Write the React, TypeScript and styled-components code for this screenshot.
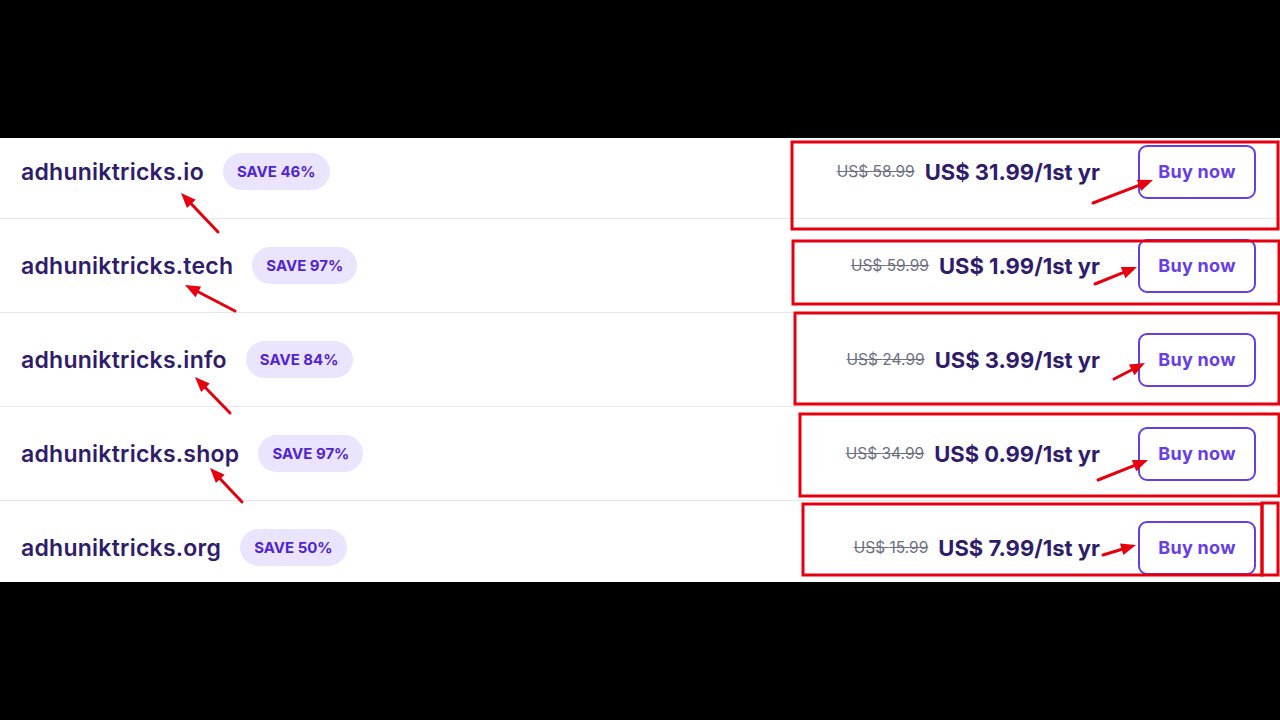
import styled, { createGlobalStyle } from "styled-components";

const GlobalStyle = createGlobalStyle`
  html, body {
    margin: 0;
    padding: 0;
    background: #000;
  }
  * {
    box-sizing: border-box;
  }
`;

const Page = styled.div`
  position: relative;
  width: 1280px;
  height: 720px;
  background: #000;
  overflow: hidden;
  font-family: Inter, "DejaVu Sans", sans-serif;
`;

const Panel = styled.section`
  margin-top: 138px;
  height: 444px;
  background: #fff;
  overflow: hidden;
`;

const List = styled.div`
  margin-top: -13px;
  display: flex;
  flex-direction: column;
`;

const Row = styled.div`
  height: 94px;
  display: flex;
  align-items: center;
  justify-content: space-between;
  padding: 0 24px 0 21px;
  border-bottom: 1px solid #e6e6ec;
`;

const Left = styled.div`
  display: flex;
  align-items: center;
  gap: 19px;
`;

const Domain = styled.span`
  font-size: 23px;
  font-weight: 600;
  color: #2f1c6a;
  letter-spacing: 0.25px;
`;

const Badge = styled.span`
  display: inline-flex;
  align-items: center;
  height: 37px;
  padding: 0 14px;
  border-radius: 19px;
  background: #ebe4ff;
  color: #5025d1;
  font-size: 15px;
  font-weight: 700;
`;

const Right = styled.div`
  display: flex;
  align-items: center;
`;

const OldPrice = styled.span`
  font-size: 15.5px;
  color: #6d7081;
  text-decoration: line-through;
  margin-right: 10px;
`;

const Price = styled.span`
  font-size: 22px;
  font-weight: 700;
  color: #2f1c6a;
  margin-right: 38px;
`;

const BuyButton = styled.button`
  width: 118px;
  height: 54px;
  border: 2px solid #673de6;
  border-radius: 9px;
  background: #fff;
  color: #673de6;
  font-family: inherit;
  font-size: 18px;
  font-weight: 700;
  letter-spacing: 0.3px;
  cursor: pointer;
`;

const Marks = styled.svg`
  position: absolute;
  inset: 0;
  pointer-events: none;
`;

const domains = [
  { name: "adhuniktricks.io", save: 46, old: "58.99", price: "31.99" },
  { name: "adhuniktricks.tech", save: 97, old: "59.99", price: "1.99" },
  { name: "adhuniktricks.info", save: 84, old: "24.99", price: "3.99" },
  { name: "adhuniktricks.shop", save: 97, old: "34.99", price: "0.99" },
  { name: "adhuniktricks.org", save: 50, old: "15.99", price: "7.99" },
];

const boxes = [
  [792, 142, 1278, 229],
  [793, 241, 1279, 304],
  [795, 313, 1279, 404],
  [800, 414, 1279, 496],
  [803, 504, 1262, 575],
  [1262, 503, 1278, 575],
];

// [tailX, tailY, tipX, tipY]
const arrows = [
  [218, 232, 181, 193],
  [235, 311, 185, 285],
  [230, 413, 195, 377],
  [242, 502, 210, 468],
  [1093, 203, 1153, 180],
  [1095, 284, 1137, 267],
  [1114, 379, 1145, 363],
  [1098, 480, 1148, 460],
  [1103, 555, 1136, 545],
];

const RED = "#e6000f";

function Arrow({ a }: { a: number[] }) {
  const [x1, y1, x2, y2] = a;
  const dx = x2 - x1;
  const dy = y2 - y1;
  const len = Math.hypot(dx, dy);
  const ux = dx / len;
  const uy = dy / len;
  const hl = 15;
  const hw = 6;
  const bx = x2 - ux * hl;
  const by = y2 - uy * hl;
  const pts = `${x2},${y2} ${bx - uy * hw},${by + ux * hw} ${bx + uy * hw},${by - ux * hw}`;
  return (
    <g>
      <line x1={x1} y1={y1} x2={bx + ux * 2} y2={by + uy * 2} stroke={RED} strokeWidth={3} strokeLinecap="round" />
      <polygon points={pts} fill={RED} />
    </g>
  );
}

export default function App() {
  return (
    <Page>
      <GlobalStyle />
      <Panel>
        <List>
          {domains.map((d) => (
            <Row key={d.name}>
              <Left>
                <Domain>{d.name}</Domain>
                <Badge>SAVE {d.save}%</Badge>
              </Left>
              <Right>
                <OldPrice>US$ {d.old}</OldPrice>
                <Price>US$ {d.price}/1st yr</Price>
                <BuyButton>Buy now</BuyButton>
              </Right>
            </Row>
          ))}
        </List>
      </Panel>
      <Marks width="1280" height="720" viewBox="0 0 1280 720">
        {boxes.map(([x1, y1, x2, y2], i) => (
          <rect key={i} x={x1} y={y1} width={x2 - x1} height={y2 - y1} fill="none" stroke={RED} strokeWidth={3} />
        ))}
        {arrows.map((a, i) => (
          <Arrow key={i} a={a} />
        ))}
      </Marks>
    </Page>
  );
}
